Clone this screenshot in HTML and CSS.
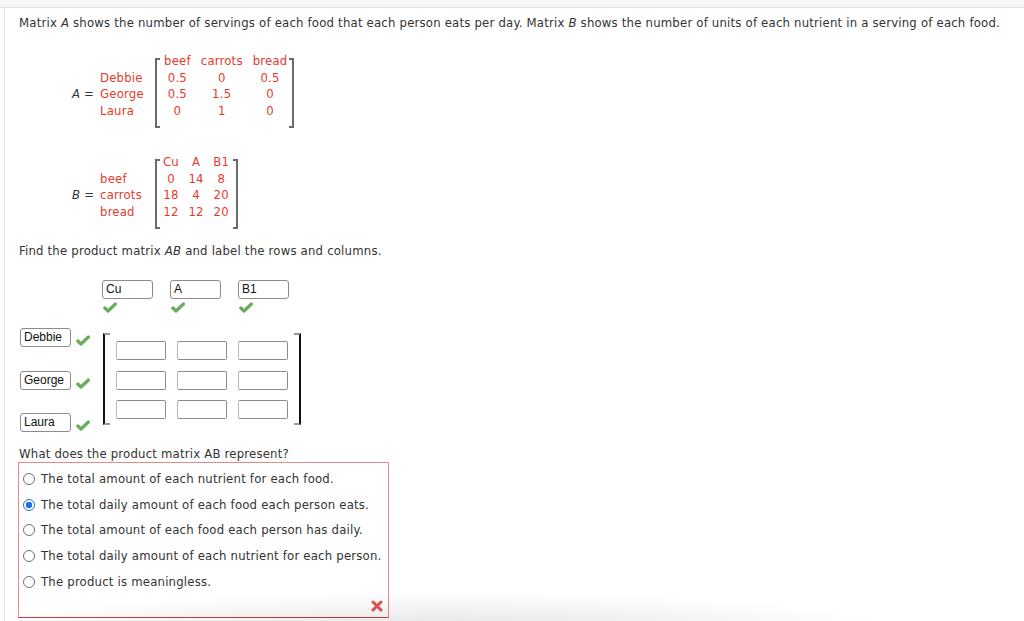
FILE: index.html
```html
<!DOCTYPE html>
<html lang="en">
<head>
<meta charset="utf-8">
<title>Matrix product</title>
<link rel="stylesheet" href="styles.css">
</head>
<body>
<div class="topbar"></div>
<div class="page">
  <p class="intro">Matrix <i>A</i> shows the number of servings of each food that each person eats per day. Matrix <i>B</i> shows the number of units of each nutrient in a serving of each food.</p>

  <div class="mat mat-a">
    <div class="eq"><i>A</i> =</div>
    <div class="labels">
      <span class="red">Debbie</span>
      <span class="red">George</span>
      <span class="red">Laura</span>
    </div>
    <div class="bracket">
      <div class="brk-l"></div>
      <div class="cells cells-a">
        <span>beef</span><span>carrots</span><span>bread</span>
        <span>0.5</span><span>0</span><span>0.5</span>
        <span>0.5</span><span>1.5</span><span>0</span>
        <span>0</span><span>1</span><span>0</span>
      </div>
      <div class="brk-r"></div>
    </div>
  </div>

  <div class="mat mat-b">
    <div class="eq"><i>B</i> =</div>
    <div class="labels">
      <span class="red">beef</span>
      <span class="red">carrots</span>
      <span class="red">bread</span>
    </div>
    <div class="bracket">
      <div class="brk-l"></div>
      <div class="cells cells-b">
        <span>Cu</span><span>A</span><span>B1</span>
        <span>0</span><span>14</span><span>8</span>
        <span>18</span><span>4</span><span>20</span>
        <span>12</span><span>12</span><span>20</span>
      </div>
      <div class="brk-r"></div>
    </div>
  </div>

  <p class="find">Find the product matrix <i>AB</i> and label the rows and columns.</p>

  <div class="product">
    <div class="col-heads">
      <div class="head"><span class="field">Cu</span><svg class="check" viewBox="0 0 14 11"><path d="M1.8 6 L5 9 L12.4 2"/></svg></div>
      <div class="head"><span class="field">A</span><svg class="check" viewBox="0 0 14 11"><path d="M1.8 6 L5 9 L12.4 2"/></svg></div>
      <div class="head"><span class="field">B1</span><svg class="check" viewBox="0 0 14 11"><path d="M1.8 6 L5 9 L12.4 2"/></svg></div>
    </div>
    <div class="prod-body">
      <div class="row-heads">
        <div class="rhead"><span class="field">Debbie</span><svg class="check" viewBox="0 0 14 11"><path d="M1.8 6 L5 9 L12.4 2"/></svg></div>
        <div class="rhead"><span class="field">George</span><svg class="check" viewBox="0 0 14 11"><path d="M1.8 6 L5 9 L12.4 2"/></svg></div>
        <div class="rhead"><span class="field">Laura</span><svg class="check" viewBox="0 0 14 11"><path d="M1.8 6 L5 9 L12.4 2"/></svg></div>
      </div>
      <div class="pbracket">
        <div class="pbrk-l"></div>
        <div class="pcells">
          <span class="cell"></span><span class="cell"></span><span class="cell"></span>
          <span class="cell"></span><span class="cell"></span><span class="cell"></span>
          <span class="cell"></span><span class="cell"></span><span class="cell"></span>
        </div>
        <div class="pbrk-r"></div>
      </div>
    </div>
  </div>

  <p class="question">What does the product matrix AB represent?</p>
  <div class="answers">
    <div class="opt"><span class="radio"></span><span>The total amount of each nutrient for each food.</span></div>
    <div class="opt"><span class="radio on"></span><span>The total daily amount of each food each person eats.</span></div>
    <div class="opt"><span class="radio"></span><span>The total amount of each food each person has daily.</span></div>
    <div class="opt"><span class="radio"></span><span>The total daily amount of each nutrient for each person.</span></div>
    <div class="opt"><span class="radio"></span><span>The product is meaningless.</span></div>
    <div class="ans-foot"><svg class="xmark" viewBox="0 0 12 12"><path d="M2 2 L10 10 M10 2 L2 10"/></svg></div>
  </div>
</div>
<div class="shade"></div>
</body>
</html>
```

FILE: styles.css
```css
html, body {
  margin: 0;
  padding: 0;
  background: #ffffff;
}
body {
  font-family: "DejaVu Sans Condensed", "DejaVu Sans", Verdana, sans-serif;
  font-size: 13px;
  letter-spacing: 0.2px;
  color: #333333;
  position: relative;
  height: 621px;
  overflow: hidden;
}
.topbar {
  height: 7px;
  background: #f6f6f6;
  border-bottom: 1px solid #e2e2e2;
}
.page {
  margin-left: 4px;
  border-left: 1px solid #e6e6e6;
  padding: 7px 0 0 14px;
  min-height: 613px;
  box-sizing: border-box;
}
p { margin: 0; line-height: 16px; white-space: nowrap; }
.red { color: #e53b2e; }

.mat {
  display: flex;
  align-items: flex-start;
  margin-left: 53px;
  line-height: 16.5px;
}
.mat-a { margin-top: 22px; }
.mat-b { margin-top: 26px; }
.eq {
  width: 28px;
  margin-top: 33px;
}
.labels {
  width: 55px;
  display: flex;
  flex-direction: column;
  padding-top: 16.5px;
}
.bracket {
  display: flex;
  margin-top: 5px;
}
.brk-l, .brk-r {
  width: 5px;
  border-top: 2px solid #6a6a6a;
  border-bottom: 2px solid #6a6a6a;
  box-sizing: border-box;
}
.brk-l { border-left: 2px solid #6a6a6a; }
.brk-r { border-right: 2px solid #6a6a6a; }
.cells {
  display: grid;
  grid-template-columns: repeat(3, auto);
  margin: -5px 0 9px;
  color: #e53b2e;
  text-align: center;
  white-space: nowrap;
}
.cells-a { column-gap: 10px; padding: 0 2px 0 4px; }
.cells-b { column-gap: 9.5px; padding: 0 4px 0 3px; }

.find { margin-top: 14px; }

.field {
  display: block;
  box-sizing: border-box;
  width: 51px;
  height: 19px;
  border: 1px solid #8c8c8c;
  border-radius: 3px;
  padding-left: 3px;
  font-family: "Liberation Sans", Arial, sans-serif;
  font-size: 12px;
  letter-spacing: 0;
  line-height: 17px;
  color: #111111;
  background: #fff;
}
.check {
  width: 14px;
  height: 11px;
  fill: none;
  stroke: #69ad5b;
  stroke-width: 3.2;
  stroke-linecap: round;
  stroke-linejoin: round;
}
.product { margin-top: 21px; }
.col-heads {
  display: flex;
  gap: 17px;
  margin-left: 83px;
}
.head {
  display: flex;
  flex-direction: column;
  align-items: flex-start;
  gap: 3px;
}
.head .check { margin-left: 1px; }
.prod-body {
  display: flex;
  align-items: flex-start;
  margin-top: 15px;
}
.row-heads {
  width: 84px;
  display: flex;
  flex-direction: column;
  gap: 23.5px;
  padding-left: 1px;
  box-sizing: border-box;
}
.rhead {
  display: flex;
  align-items: flex-end;
  gap: 5px;
}
.rhead .check { margin-bottom: 1px; }
.pbracket {
  display: flex;
  margin-top: 5px;
}
.pbrk-l, .pbrk-r {
  width: 7px;
  border-top: 2px solid #9a9a9a;
  border-bottom: 2px solid #9a9a9a;
  box-sizing: border-box;
}
.pbrk-l { border-left: 2px solid #111; }
.pbrk-r { border-right: 2px solid #111; }
.pcells {
  display: grid;
  grid-template-columns: repeat(3, 50px);
  grid-auto-rows: 19px;
  column-gap: 11px;
  row-gap: 10.5px;
  padding: 8px 6px 6px 6px;
}
.cell {
  display: block;
  box-sizing: border-box;
  border: 1px solid #8c8c8c;
  border-left-color: #b8b8b8;
  border-radius: 2px;
  background: #fff;
}

.question { margin-top: 14px; }
.answers {
  width: 371px;
  box-sizing: border-box;
  margin: 0 0 0 -1px;
  border: 1px solid #e88a86;
  border-bottom-color: #d63c36;
  padding: 3px 0 5px 4px;
  white-space: nowrap;
}
.opt {
  display: flex;
  align-items: center;
  gap: 6px;
  height: 25.75px;
  line-height: 16px;
}
.radio {
  width: 12px;
  height: 12px;
  border: 1px solid #6e6e6e;
  border-radius: 50%;
  box-sizing: border-box;
  flex: none;
  background: #fff;
}
.radio.on {
  border: 1.5px solid #1a73e8;
  background: radial-gradient(circle, #1a73e8 0 3px, #ffffff 3.3px);
}
.ans-foot {
  display: flex;
  justify-content: flex-end;
  padding-right: 5px;
  margin-top: 5px;
}
.xmark {
  width: 12px;
  height: 12px;
  fill: none;
  stroke: #e05252;
  stroke-width: 3;
  stroke-linecap: round;
}
.shade {
  position: absolute;
  left: 0;
  top: 585px;
  width: 900px;
  height: 36px;
  pointer-events: none;
  background: radial-gradient(ellipse 460px 40px at 440px 46px, rgba(0,0,0,0.11), rgba(0,0,0,0) 100%);
}
```
